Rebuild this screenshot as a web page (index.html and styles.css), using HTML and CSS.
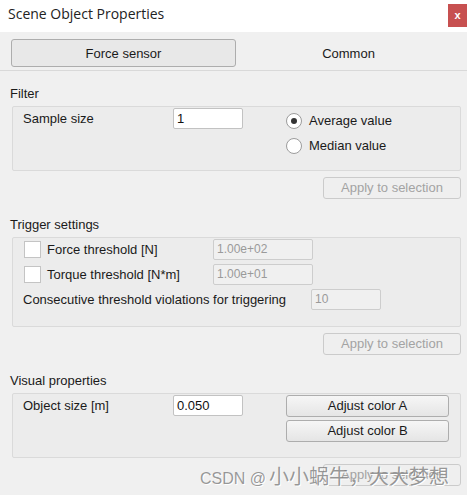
FILE: index.html
```html
<!DOCTYPE html>
<html lang="en">
<head>
  <meta charset="UTF-8">
  <title>Scene Object Properties</title>
  <link rel="stylesheet" href="styles.css">
</head>
<body>
  <div class="dialog">
    <!-- Title bar -->
    <div class="titlebar">
      <span class="title">Scene Object Properties</span>
      <span class="close">x</span>
    </div>

    <!-- Tabs -->
    <div class="tabs">
      <div class="tab active">Force sensor</div>
      <div class="tab">Common</div>
    </div>

    <!-- Filter -->
    <div class="section-label first">Filter</div>
    <div class="group filter-group">
      <div class="col">
        <div class="row"><span class="label">Sample size</span><span class="field">1</span></div>
      </div>
      <div class="col radios">
        <div class="row"><span class="radio checked"></span>Average value</div>
        <div class="row"><span class="radio"></span>Median value</div>
      </div>
    </div>
    <div class="apply-row"><span class="btn disabled apply">Apply to selection</span></div>

    <!-- Trigger settings -->
    <div class="section-label">Trigger settings</div>
    <div class="group trigger-group">
      <div class="row"><span class="check"></span><span class="label check-label">Force threshold [N]</span><span class="field disabled wide">1.00e+02</span></div>
      <div class="row"><span class="check"></span><span class="label check-label">Torque threshold [N*m]</span><span class="field disabled wide">1.00e+01</span></div>
      <div class="row"><span class="label long-label">Consecutive threshold violations for triggering</span><span class="field disabled">10</span></div>
    </div>
    <div class="apply-row"><span class="btn disabled apply">Apply to selection</span></div>

    <!-- Visual properties -->
    <div class="section-label">Visual properties</div>
    <div class="group visual-group">
      <div class="col">
        <div class="row"><span class="label">Object size [m]</span><span class="field">0.050</span></div>
      </div>
      <div class="col buttons">
        <div class="row"><span class="btn color-btn">Adjust color A</span></div>
        <div class="row"><span class="btn color-btn">Adjust color B</span></div>
      </div>
    </div>
    <div class="apply-row"><span class="btn disabled apply">Apply to selection</span></div>

    <div class="watermark">CSDN @<span class="cjk">小小蜗牛，大大梦想</span></div>
  </div>
</body>
</html>
```

FILE: styles.css
```css
body {
  margin: 0;
  padding: 0;
  font-family: "Liberation Sans", Arial, sans-serif;
  font-size: 13px;
  color: #1a1a1a;
  background-color: #f0f0f0;
}

.dialog {
  position: relative;
  width: 467px;
  height: 495px;
  overflow: hidden;
  background-color: #f0f0f0;
}

/* Title bar */
.titlebar {
  height: 32px;
  background-color: #ffffff;
  display: flex;
  justify-content: space-between;
  align-items: flex-start;
}

.title {
  font-family: "Open Sans", "Liberation Sans", sans-serif;
  font-size: 14px;
  line-height: 28px;
  margin-left: 8px;
  color: #222;
}

.close {
  width: 19px;
  height: 23px;
  margin-top: 4px;
  background-color: #c75050;
  color: #fff;
  font-weight: bold;
  font-size: 11px;
  line-height: 22px;
  text-align: center;
}

/* Tabs */
.tabs {
  display: grid;
  grid-template-columns: 225px 225px;
  padding: 7px 0 3px 11px;
  border-bottom: 1px solid #d9d9d9;
}

.tab {
  height: 26px;
  line-height: 28px;
  text-align: center;
  border: 1px solid transparent;
}

.tab.active {
  background-color: #e8e8e8;
  border-color: #adadad;
  border-radius: 3px;
}

/* Sections */
.section-label {
  height: 20px;
  line-height: 20px;
  margin: 16px 0 2px 10px;
}

.section-label.first {
  margin-top: 13px;
}

.group {
  margin: 0 6px 0 12px;
  padding: 1px 10px 16px;
  border: 1px solid #dadada;
  border-radius: 2px;
  background-color: #ececec;
  display: flex;
  flex-direction: column;
  gap: 4px;
}

.filter-group,
.visual-group {
  flex-direction: row;
  gap: 43px;
}

.filter-group {
  padding-bottom: 14px;
}

.col {
  display: flex;
  flex-direction: column;
  gap: 4px;
}

.row {
  height: 21px;
  display: flex;
  align-items: center;
}

.label {
  width: 150px;
}

.check {
  width: 15px;
  height: 15px;
  border: 1px solid #c4c4c4;
  background-color: #fff;
  margin: 0 6px 0 1px;
}

.check-label {
  width: 166px;
}

.long-label {
  width: 288px;
}

.field {
  box-sizing: border-box;
  width: 70px;
  height: 21px;
  line-height: 19px;
  padding-left: 3px;
  border: 1px solid #c2c2c2;
  border-radius: 2px;
  background-color: #fff;
  color: #111;
}

.field.wide {
  width: 100px;
}

.field.disabled {
  background-color: #f0f0f0;
  border-color: #cdcdcd;
  color: #9a9a9a;
  font-size: 12px;
}

.radios {
  margin-top: 2px;
}

.radio {
  box-sizing: border-box;
  width: 16px;
  height: 16px;
  border: 1px solid #9c9c9c;
  border-radius: 50%;
  background-color: #fff;
  margin-right: 7px;
  display: flex;
  align-items: center;
  justify-content: center;
}

.radio.checked::after {
  content: "";
  width: 6px;
  height: 6px;
  border-radius: 50%;
  background-color: #333;
}

/* Buttons */
.btn {
  box-sizing: border-box;
  display: inline-block;
  text-align: center;
  border: 1px solid #adadad;
  border-radius: 3px;
  background: linear-gradient(#f6f6f6, #e5e5e5);
}

.btn.disabled {
  border-color: #cbcbcb;
  background: #efefef;
  color: #a3a3a3;
}

.apply-row {
  display: flex;
  justify-content: flex-end;
  margin: 6px 6px 0 0;
}

.apply {
  width: 138px;
  height: 22px;
  line-height: 20px;
}

.color-btn {
  width: 163px;
  height: 22px;
  line-height: 20px;
}

.watermark {
  position: absolute;
  left: 200px;
  top: 464px;
  font-family: "Liberation Sans", "Noto Sans CJK SC", sans-serif;
  font-size: 16px;
  line-height: 24px;
  color: rgba(120, 120, 120, 0.75);
  text-shadow: 1px 1px 0 #fff;
  white-space: nowrap;
}

.watermark .cjk {
  font-family: "Noto Sans CJK SC", sans-serif;
  font-size: 20px;
  margin-left: 3px;
}
```
